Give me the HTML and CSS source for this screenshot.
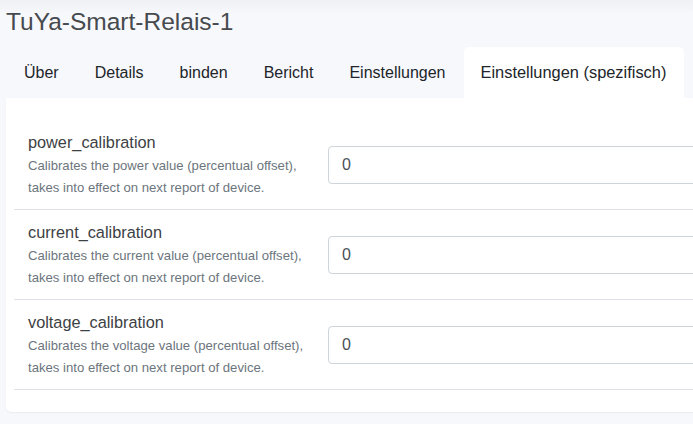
FILE: index.html
```html
<!DOCTYPE html>
<html lang="de">
<head>
<meta charset="utf-8">
<title>TuYa-Smart-Relais-1</title>
<link rel="stylesheet" href="styles.css">
</head>
<body>
<div class="page">
  <h1 class="title">TuYa-Smart-Relais-1</h1>
  <nav class="tabs">
    <a class="tab">Über</a>
    <a class="tab">Details</a>
    <a class="tab">binden</a>
    <a class="tab">Bericht</a>
    <a class="tab">Einstellungen</a>
    <a class="tab active">Einstellungen (spezifisch)</a>
  </nav>
  <div class="card">
    <div class="setting">
      <div class="info">
        <div class="name">power_calibration</div>
        <div class="desc">Calibrates the power value (percentual offset), takes into effect on next report of device.</div>
      </div>
      <div class="control"><input class="field" type="text" value="0"></div>
    </div>
    <div class="setting">
      <div class="info">
        <div class="name">current_calibration</div>
        <div class="desc">Calibrates the current value (percentual offset), takes into effect on next report of device.</div>
      </div>
      <div class="control"><input class="field" type="text" value="0"></div>
    </div>
    <div class="setting">
      <div class="info">
        <div class="name">voltage_calibration</div>
        <div class="desc">Calibrates the voltage value (percentual offset), takes into effect on next report of device.</div>
      </div>
      <div class="control"><input class="field" type="text" value="0"></div>
    </div>
  </div>
</div>
</body>
</html>
```
FILE: styles.css
```css
html, body {
  margin: 0;
  padding: 0;
  overflow: hidden;
}
body {
  background: linear-gradient(#eff0f4, #f7f8fc 14px) #f7f8fc;
  font-family: "Liberation Sans", Arial, sans-serif;
  color: #212529;
  width: 693px;
  height: 424px;
}
.page {
  padding: 0 0 0 6px;
  width: 820px;
}
.title {
  margin: 0;
  padding-top: 8px;
  font-size: 24.5px;
  line-height: 28px;
  font-weight: 400;
  color: #464a4f;
}
.tabs {
  display: flex;
  margin-top: 11px;
}
.tab {
  display: block;
  padding: 0 18px 0 18px;
  height: 51px;
  line-height: 51px;
  font-size: 16px;
  color: #212529;
  border-radius: 5px 5px 0 0;
}
.tab.active {
  background: #fff;
  font-size: 16.4px;
  padding: 0 18px 0 17px;
}
.card {
  background: #fff;
  border-radius: 0 0 5px 5px;
  box-shadow: 0 1px 2px rgba(0, 0, 0, 0.06);
  padding: 22px 0 22px 8px;
}
.setting {
  display: flex;
  align-items: center;
  padding: 10px 0 10px 14px;
  border-bottom: 1px solid #dee2e6;
}
.info {
  width: 286px;
  padding-right: 14px;
}
.name {
  font-size: 16.3px;
  line-height: 24px;
  margin-bottom: 1px;
  color: #3d4144;
}
.desc {
  font-size: 13.15px;
  line-height: 22px;
  color: #6c757d;
}
.control {
  flex: 1;
}
.field {
  display: block;
  box-sizing: border-box;
  width: 100%;
  height: 38px;
  margin: 0;
  padding: 0 13px;
  border: 1px solid #ced4da;
  border-radius: 4px;
  font-family: "Liberation Sans", Arial, sans-serif;
  font-size: 16px;
  color: #495057;
  background: #fff;
  outline: none;
}
```
